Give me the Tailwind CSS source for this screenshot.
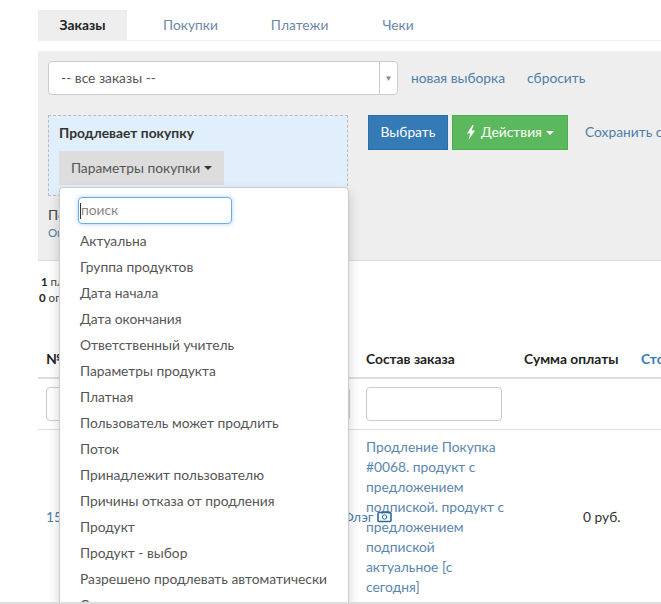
<!doctype html>
<html><head><meta charset="utf-8"><script src="https://cdn.jsdelivr.net/npm/@tailwindcss/browser@4"></script></head>
<body class="bg-white">
<div class="relative w-[661px] h-[604px] overflow-hidden pl-[38px] pt-[10px] font-['Lato','Open_Sans',sans-serif] text-[13.8px] text-[#333] border-b-2 border-[#ddd]">
  <div class="flex h-[31px] border-b border-[#eee] w-[700px] text-[#6b87a8]">
    <div class="w-[89px] h-[30px] bg-[#eee] flex items-center justify-center font-bold text-[#222]">Заказы</div>
    <div class="ml-[36px] h-[30px] flex items-center">Покупки</div>
    <div class="ml-[53px] h-[30px] flex items-center">Платежи</div>
    <div class="ml-[54px] h-[30px] flex items-center">Чеки</div>
  </div>
  <div class="mt-[10px] h-[210px] w-[700px] bg-[#eee] pt-[10px] pl-[10px] border-b border-[#ddd]">
    <div class="flex items-center h-[34px]">
      <div class="w-[350px] h-[34px] bg-white border border-[#ccc] rounded flex items-center justify-between">
        <span class="pl-[12px] text-[#555]">-- все заказы --</span>
        <span class="w-[18px] h-full border-l border-[#ccc] flex items-center justify-center text-[#888] text-[8px]">▼</span>
      </div>
      <span class="ml-[13px] text-[#4f7fa8]">новая выборка</span>
      <span class="ml-[22px] text-[#4f7fa8]">сбросить</span>
    </div>
    <div class="flex mt-[20px]">
      <div class="w-[300px] h-[81px] bg-[#e1effc] border border-dashed border-[#bbb] pl-[10px] pt-[8px]">
        <div class="font-bold text-[#333] leading-[18px]">Продлевает покупку</div>
        <div class="mt-[9px] w-[165px] h-[34px] bg-[#ddd] flex items-center justify-center text-[#555]">Параметры покупки<span class="ml-[4px] w-0 h-0 border-x-[4px] border-x-transparent border-t-[4px] border-t-[#333]"></span></div>
      </div>
      <div class="ml-[20px] w-[80px] h-[35px] bg-[#337ab7] border border-[#2e6da4] text-white flex items-center justify-center">Выбрать</div>
      <div class="ml-[4px] w-[116px] h-[35px] bg-[#5cb85c] border border-[#4cae4c] text-white flex items-center justify-center">
        <svg class="w-[10px] h-[15px] mr-[5px]" viewBox="0 0 10 15"><path d="M6.5 0 1 8.5h3.2L2.5 15 9 5.5H5.6L7.8 0z" fill="#fff"/></svg>Действия<span class="ml-[4px] w-0 h-0 border-x-[4px] border-x-transparent border-t-[4px] border-t-white"></span>
      </div>
      <div class="ml-[17px] h-[35px] flex items-center whitespace-nowrap text-[#4f7fa8]">Сохранить список</div>
    </div>
    <div class="mt-[10px] leading-[18px] text-[#444]">По</div>
    <div class="text-[11.5px] leading-[18px] text-[#4f7fa8]">Оп</div>
  </div>
  <div class="mt-[13px] text-[11.5px] leading-[16px] text-[#444]">
    <div class="pl-[3px]"><b class="text-[#222]">1</b> пл</div>
    <div class="pl-[1px]"><b class="text-[#222]">0</b> оп</div>
  </div>
  <div class="mt-[36px] w-[700px]">
    <div class="flex h-[37px] items-center border-b-2 border-[#ddd] font-bold text-[#222]">
      <span class="ml-[8px] w-[320px]">№</span>
      <span class="w-[158px]">Состав заказа</span>
      <span class="w-[117px]">Сумма оплаты</span>
      <span class="text-[#337ab7]">Стоимость</span>
    </div>
    <div class="flex h-[51px] border-b border-[#ddd] pt-[8px]">
      <div class="ml-[8px] w-[304px] h-[34px] bg-white border border-[#ccc] rounded"></div>
      <div class="ml-[16px] w-[136px] h-[34px] bg-white border border-[#ccc] rounded"></div>
    </div>
    <div class="flex items-center h-[174px]">
      <span class="ml-[8px] w-[320px] text-[#4f7fa8]">157</span>
      <div class="w-[140px] leading-[20px] text-[#5a86ae]">Продление Покупка #0068. продукт с предложением подпиской. продукт с предложением подпиской актуальное [с сегодня]</div>
      <span class="ml-[77px] text-[#333]">0 руб.</span>
    </div>
  </div>
  <div class="absolute left-[343px] top-[507px] flex items-center gap-[3px] text-[#4f7fa8] leading-[20px]">Флэг
    <svg class="w-[15px] h-[12px]" viewBox="0 0 15 12"><rect x="1" y="1.5" width="13" height="9" rx="1" fill="none" stroke="#2d6a9f" stroke-width="1.6"/><circle cx="7.5" cy="6" r="2.2" fill="none" stroke="#2d6a9f"/></svg>
  </div>
  <div class="absolute left-[59px] top-[187px] w-[290px] h-[430px] bg-white border border-[#ccc] rounded shadow-[0_6px_12px_rgba(0,0,0,0.18)] pt-[9px] text-[#555]">
    <div class="ml-[18px] w-[154px] h-[27px] border border-[#66afe9] rounded-sm shadow-[0_0_4px_rgba(102,175,233,0.6)] flex items-center pl-[1px] text-[#888]"><span class="w-px h-[16px] bg-[#333]"></span>поиск</div>
    <div class="mt-[4px] pl-[20px] leading-[26px]">
      <div>Актуальна</div><div>Группа продуктов</div><div>Дата начала</div><div>Дата окончания</div><div>Ответственный учитель</div><div>Параметры продукта</div><div>Платная</div><div>Пользователь может продлить</div><div>Поток</div><div>Принадлежит пользователю</div><div>Причины отказа от продления</div><div>Продукт</div><div>Продукт - выбор</div><div>Разрешено продлевать автоматически</div><div>Сумма</div>
    </div>
  </div>
</div>
</body></html>
